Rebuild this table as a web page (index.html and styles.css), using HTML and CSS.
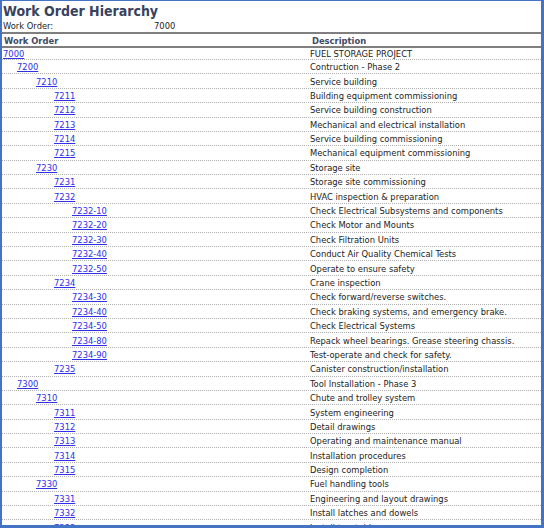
FILE: index.html
```html
<!DOCTYPE html>
<html>
<head>
<meta charset="utf-8">
<link rel="stylesheet" href="styles.css">
</head>
<body>
<div class="frame">
  <h1 class="title">Work Order Hierarchy</h1>
  <div class="param"><span class="param-label">Work Order:</span><span class="param-value">7000</span></div>
  <div class="head row-grid">
    <div class="cell">Work Order</div>
    <div class="cell desc">Description</div>
  </div>
  <div class="rows">
    <div class="row row-grid first"><div class="cell l0"><a href="#">7000</a></div><div class="cell desc">FUEL STORAGE PROJECT</div></div>
    <div class="row row-grid"><div class="cell l1"><a href="#">7200</a></div><div class="cell desc">Contruction - Phase 2</div></div>
    <div class="row row-grid"><div class="cell l2"><a href="#">7210</a></div><div class="cell desc">Service building</div></div>
    <div class="row row-grid"><div class="cell l3"><a href="#">7211</a></div><div class="cell desc">Building equipment commissioning</div></div>
    <div class="row row-grid"><div class="cell l3"><a href="#">7212</a></div><div class="cell desc">Service building construction</div></div>
    <div class="row row-grid"><div class="cell l3"><a href="#">7213</a></div><div class="cell desc">Mechanical and electrical installation</div></div>
    <div class="row row-grid"><div class="cell l3"><a href="#">7214</a></div><div class="cell desc">Service building commissioning</div></div>
    <div class="row row-grid"><div class="cell l3"><a href="#">7215</a></div><div class="cell desc">Mechanical equipment commissioning</div></div>
    <div class="row row-grid"><div class="cell l2"><a href="#">7230</a></div><div class="cell desc">Storage site</div></div>
    <div class="row row-grid"><div class="cell l3"><a href="#">7231</a></div><div class="cell desc">Storage site commissioning</div></div>
    <div class="row row-grid"><div class="cell l3"><a href="#">7232</a></div><div class="cell desc">HVAC inspection &amp; preparation</div></div>
    <div class="row row-grid"><div class="cell l4"><a href="#">7232-10</a></div><div class="cell desc">Check Electrical Subsystems and components</div></div>
    <div class="row row-grid"><div class="cell l4"><a href="#">7232-20</a></div><div class="cell desc">Check Motor and Mounts</div></div>
    <div class="row row-grid"><div class="cell l4"><a href="#">7232-30</a></div><div class="cell desc">Check Filtration Units</div></div>
    <div class="row row-grid"><div class="cell l4"><a href="#">7232-40</a></div><div class="cell desc">Conduct Air Quality Chemical Tests</div></div>
    <div class="row row-grid"><div class="cell l4"><a href="#">7232-50</a></div><div class="cell desc">Operate to ensure safety</div></div>
    <div class="row row-grid"><div class="cell l3"><a href="#">7234</a></div><div class="cell desc">Crane inspection</div></div>
    <div class="row row-grid"><div class="cell l4"><a href="#">7234-30</a></div><div class="cell desc">Check forward/reverse switches.</div></div>
    <div class="row row-grid"><div class="cell l4"><a href="#">7234-40</a></div><div class="cell desc">Check braking systems, and emergency brake.</div></div>
    <div class="row row-grid"><div class="cell l4"><a href="#">7234-50</a></div><div class="cell desc">Check Electrical Systems</div></div>
    <div class="row row-grid"><div class="cell l4"><a href="#">7234-80</a></div><div class="cell desc">Repack wheel bearings. Grease steering chassis.</div></div>
    <div class="row row-grid"><div class="cell l4"><a href="#">7234-90</a></div><div class="cell desc">Test-operate and check for safety.</div></div>
    <div class="row row-grid"><div class="cell l3"><a href="#">7235</a></div><div class="cell desc">Canister construction/installation</div></div>
    <div class="row row-grid"><div class="cell l1"><a href="#">7300</a></div><div class="cell desc">Tool Installation - Phase 3</div></div>
    <div class="row row-grid"><div class="cell l2"><a href="#">7310</a></div><div class="cell desc">Chute and trolley system</div></div>
    <div class="row row-grid"><div class="cell l3"><a href="#">7311</a></div><div class="cell desc">System engineering</div></div>
    <div class="row row-grid"><div class="cell l3"><a href="#">7312</a></div><div class="cell desc">Detail drawings</div></div>
    <div class="row row-grid"><div class="cell l3"><a href="#">7313</a></div><div class="cell desc">Operating and maintenance manual</div></div>
    <div class="row row-grid"><div class="cell l3"><a href="#">7314</a></div><div class="cell desc">Installation procedures</div></div>
    <div class="row row-grid"><div class="cell l3"><a href="#">7315</a></div><div class="cell desc">Design completion</div></div>
    <div class="row row-grid"><div class="cell l2"><a href="#">7330</a></div><div class="cell desc">Fuel handling tools</div></div>
    <div class="row row-grid"><div class="cell l3"><a href="#">7331</a></div><div class="cell desc">Engineering and layout drawings</div></div>
    <div class="row row-grid"><div class="cell l3"><a href="#">7332</a></div><div class="cell desc">Install latches and dowels</div></div>
    <div class="row row-grid"><div class="cell l3"><a href="#">7333</a></div><div class="cell desc">Install turntable</div></div>
  </div>
</div>
</body>
</html>
```
FILE: styles.css
```css
html, body {
  margin: 0;
  padding: 0;
  background: #fff;
}
.frame {
  width: 544px;
  height: 528px;
  box-sizing: border-box;
  border-left: 2px solid #4472c4;
  border-top: 1px solid #4472c4;
  border-right: 3px solid #4472c4;
  border-bottom: 3px solid #4472c4;
  overflow: hidden;
  font-family: "DejaVu Sans Condensed", "DejaVu Sans", sans-serif;
  font-size: 9.3px;
  color: #222;
}
.title {
  margin: 0;
  padding: 1px 0 0 1px;
  font-size: 14px;
  line-height: 18px;
  font-weight: bold;
  color: #37425f;
}
.param {
  display: flex;
  height: 12px;
  line-height: 12px;
  padding-left: 1px;
  color: #222;
}
.param-label {
  width: 151px;
}
.row-grid {
  display: grid;
  grid-template-columns: 307px 1fr;
  align-items: center;
}
.head {
  border-top: 2px solid #7f7f7f;
  border-bottom: 2px solid #7f7f7f;
  height: 16px;
  box-sizing: border-box;
  font-weight: bold;
  color: #3f4a63;
  padding-left: 2px;
}
.row {
  height: 14.4px;
  box-sizing: border-box;
  border-bottom: 1px dotted #b0b0b0;
  line-height: 13px;
}
.row.first {
  height: 11.94px;
}
.cell {
  white-space: nowrap;
  overflow: hidden;
}
.desc {
  padding-left: 1px;
}
.l0 { padding-left: 1px; }
.l1 { padding-left: 15px; }
.l2 { padding-left: 34px; }
.l3 { padding-left: 52px; }
.l4 { padding-left: 70px; }
a {
  color: #3030ea;
  text-decoration: underline;
}
```
